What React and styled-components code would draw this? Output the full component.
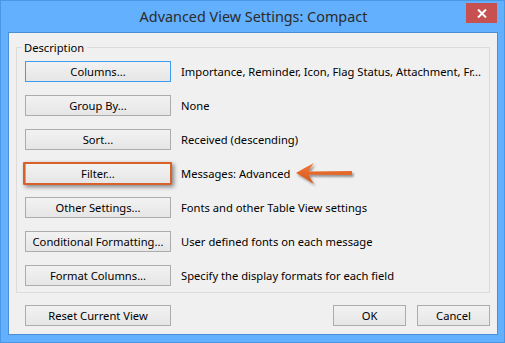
import React from "react";
import styled, { createGlobalStyle } from "styled-components";

const Global = createGlobalStyle`
  html, body { margin: 0; padding: 0; background: #ffffff; }
  body { font-family: "Segoe UI", "Noto Sans", "Open Sans", sans-serif; }
`;

const Window = styled.div`
  width: 505px;
  height: 343px;
  box-sizing: border-box;
  background: #62b0fe;
  border: 1px solid #4a97e6;
  display: flex;
  flex-direction: column;
`;

const TitleBar = styled.div`
  height: 31px;
  position: relative;
  display: flex;
  align-items: center;
  justify-content: center;
`;

const Title = styled.div`
  font-family: "Noto Sans", "Open Sans", sans-serif;
  font-size: 14.4px;
  color: #2b2b2b;
  padding-left: 2px;
`;

const CloseButton = styled.div`
  position: absolute;
  top: 2px;
  right: 7px;
  width: 31px;
  height: 20px;
  background: #c75050;
  display: flex;
  align-items: center;
  justify-content: center;
`;

const Content = styled.div`
  flex: 1;
  margin: 0 6px 7px 7px;
  background: #f0f0f0;
  border: 1px solid #4a8fd6;
  padding: 7px 7px 0 7px;
  display: flex;
  flex-direction: column;
`;

const GroupBox = styled.fieldset`
  margin: 0;
  padding: 6px 8px 6px 8px;
  border: 1px solid #dcdcdc;
  border-radius: 0;
  display: flex;
  flex-direction: column;
  gap: 13px;
`;

const Legend = styled.legend`
  font-size: 11.2px;
  color: #000;
  padding: 0 3px 0 2px;
  margin-left: -3px;
`;

const Row = styled.div`
  display: flex;
  align-items: center;
  gap: 10px;
  height: 21px;
`;

const Button = styled.div`
  box-sizing: border-box;
  width: ${(p) => p.$w || 146}px;
  height: 21px;
  flex: none;
  display: flex;
  align-items: center;
  justify-content: center;
  font-size: 11.2px;
  color: #000;
  background: linear-gradient(#f2f2f2, #e6e6e6);
  border: 1px solid ${(p) => (p.$focus ? "#3c9cf0" : "#acacac")};
  position: relative;
`;

const Highlight = styled.div`
  position: absolute;
  left: -3px;
  top: -2px;
  right: -2px;
  bottom: -2px;
  border: 2px solid #d8612a;
  box-shadow: 2px 2px 4px rgba(0, 0, 0, 0.45);
  border-radius: 1px;
`;

const Desc = styled.div`
  font-size: 11.2px;
  color: #000;
  white-space: nowrap;
  display: flex;
  align-items: center;
  gap: 4px;
`;

const Footer = styled.div`
  display: flex;
  align-items: center;
  padding: 12px 0 0 9px;
`;

const Spacer = styled.div`
  flex: 1;
`;

const FooterRight = styled.div`
  display: flex;
  gap: 11px;
`;

const Arrow = () => (
  <svg width="64" height="26" viewBox="0 0 64 26" style={{ marginTop: 2 }}>
    <defs>
      <filter id="sh" x="-20%" y="-50%" width="140%" height="200%">
        <feDropShadow dx="1.5" dy="2" stdDeviation="1.3" floodColor="#000" floodOpacity="0.4" />
      </filter>
      <linearGradient id="ag" x1="0" y1="0" x2="0" y2="1">
        <stop offset="0" stopColor="#f07a3a" />
        <stop offset="1" stopColor="#d5561c" />
      </linearGradient>
    </defs>
    <g filter="url(#sh)">
      <path
        d="M2 11 Q12 5 20 1 Q16 6 15 9.5 L58 9 L58 13 L15 12.8 Q16 17 20 22 Q11 16 2 11 Z"
        fill="url(#ag)"
      />
    </g>
  </svg>
);

const rows = [
  ["Columns...", "Importance, Reminder, Icon, Flag Status, Attachment, Fr...", "focus"],
  ["Group By...", "None"],
  ["Sort...", "Received (descending)"],
  ["Filter...", "Messages: Advanced", "hl"],
  ["Other Settings...", "Fonts and other Table View settings"],
  ["Conditional Formatting...", "User defined fonts on each message"],
  ["Format Columns...", "Specify the display formats for each field"],
];

export default function App() {
  return (
    <>
      <Global />
      <Window>
        <TitleBar>
          <Title>Advanced View Settings: Compact</Title>
          <CloseButton>
            <svg width="10" height="9" viewBox="0 0 10 9">
              <path d="M1 0.5 L9 8.5 M9 0.5 L1 8.5" stroke="#fff" strokeWidth="2" />
            </svg>
          </CloseButton>
        </TitleBar>
        <Content>
          <GroupBox>
            <Legend>Description</Legend>
            {rows.map(([b, d, k]) => (
              <Row key={b}>
                <Button $focus={k === "focus"}>
                  {b}
                  {k === "hl" && <Highlight />}
                </Button>
                <Desc>
                  {d}
                  {k === "hl" && <Arrow />}
                </Desc>
              </Row>
            ))}
          </GroupBox>
          <Footer>
            <Button>Reset Current View</Button>
            <Spacer />
            <FooterRight>
              <Button $w={73}>OK</Button>
              <Button $w={73}>Cancel</Button>
            </FooterRight>
          </Footer>
        </Content>
      </Window>
    </>
  );
}
